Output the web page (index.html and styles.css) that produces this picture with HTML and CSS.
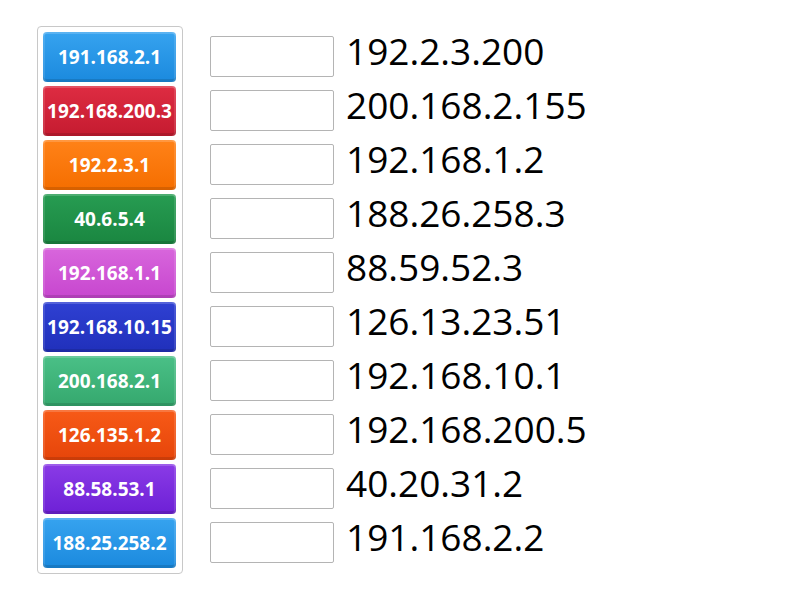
FILE: index.html
```html
<!DOCTYPE html>
<html>
<head>
<meta charset="utf-8">
<link rel="stylesheet" href="styles.css">
</head>
<body>
<div class="page">
  <div class="bank">
    <div class="tile c1">191.168.2.1</div>
    <div class="tile c2">192.168.200.3</div>
    <div class="tile c3">192.2.3.1</div>
    <div class="tile c4">40.6.5.4</div>
    <div class="tile c5">192.168.1.1</div>
    <div class="tile c6">192.168.10.15</div>
    <div class="tile c7">200.168.2.1</div>
    <div class="tile c8">126.135.1.2</div>
    <div class="tile c9">88.58.53.1</div>
    <div class="tile c10">188.25.258.2</div>
  </div>
  <div class="targets">
    <div class="row"><div class="slot"></div><div class="label">192.2.3.200</div></div>
    <div class="row"><div class="slot"></div><div class="label">200.168.2.155</div></div>
    <div class="row"><div class="slot"></div><div class="label">192.168.1.2</div></div>
    <div class="row"><div class="slot"></div><div class="label">188.26.258.3</div></div>
    <div class="row"><div class="slot"></div><div class="label">88.59.52.3</div></div>
    <div class="row"><div class="slot"></div><div class="label">126.13.23.51</div></div>
    <div class="row"><div class="slot"></div><div class="label">192.168.10.1</div></div>
    <div class="row"><div class="slot"></div><div class="label">192.168.200.5</div></div>
    <div class="row"><div class="slot"></div><div class="label">40.20.31.2</div></div>
    <div class="row"><div class="slot"></div><div class="label">191.168.2.2</div></div>
  </div>
</div>
</body>
</html>
```
FILE: styles.css
```css
html, body {
  margin: 0;
  padding: 0;
  background: #ffffff;
}
.page {
  display: flex;
  align-items: flex-start;
  padding: 26px 0 0 37px;
  font-family: "Open Sans", "Noto Sans", sans-serif;
}
.bank {
  display: flex;
  flex-direction: column;
  gap: 4px;
  padding: 5px 6px 5px 5px;
  border: 1px solid #c8c8c8;
  border-radius: 4px;
}
.tile {
  width: 133px;
  height: 50px;
  box-sizing: border-box;
  border-radius: 4px;
  display: flex;
  align-items: center;
  justify-content: center;
  color: #ffffff;
  font-weight: 700;
  font-size: 19px;
  white-space: nowrap;
  box-shadow: inset 0 2px 0 rgba(255,255,255,0.18), inset 2px 0 0 rgba(255,255,255,0.12), inset -2px 0 0 rgba(255,255,255,0.12), inset 0 -3px 0 rgba(0,0,0,0.12);
}
.c1 { background: linear-gradient(#36a3ef, #1b8ade); }
.c2 { background: linear-gradient(#de2c42, #c51b30); }
.c3 { background: linear-gradient(#ff8218, #f56e00); }
.c4 { background: linear-gradient(#279c52, #1a8640); }
.c5 { background: linear-gradient(#d866dc, #c746cf); }
.c6 { background: linear-gradient(#2f40d2, #2030bb); }
.c7 { background: linear-gradient(#4ac087, #35a86e); }
.c8 { background: linear-gradient(#f75a17, #e6450a); }
.c9 { background: linear-gradient(#8a3be6, #6d20d6); }
.c10 { background: linear-gradient(#36a3ef, #1b8ade); }
.targets {
  display: flex;
  flex-direction: column;
  margin-left: 27px;
  padding-top: 10px;
}
.row {
  display: flex;
  align-items: flex-start;
  height: 54px;
}
.slot {
  width: 124px;
  height: 41px;
  box-sizing: border-box;
  border: 1px solid #b4b4b4;
  border-radius: 2px;
  background: #ffffff;
  flex: none;
}
.label {
  margin-left: 12px;
  font-size: 37px;
  line-height: 36px;
  margin-top: -3px;
  color: #000000;
  white-space: nowrap;
}
```
